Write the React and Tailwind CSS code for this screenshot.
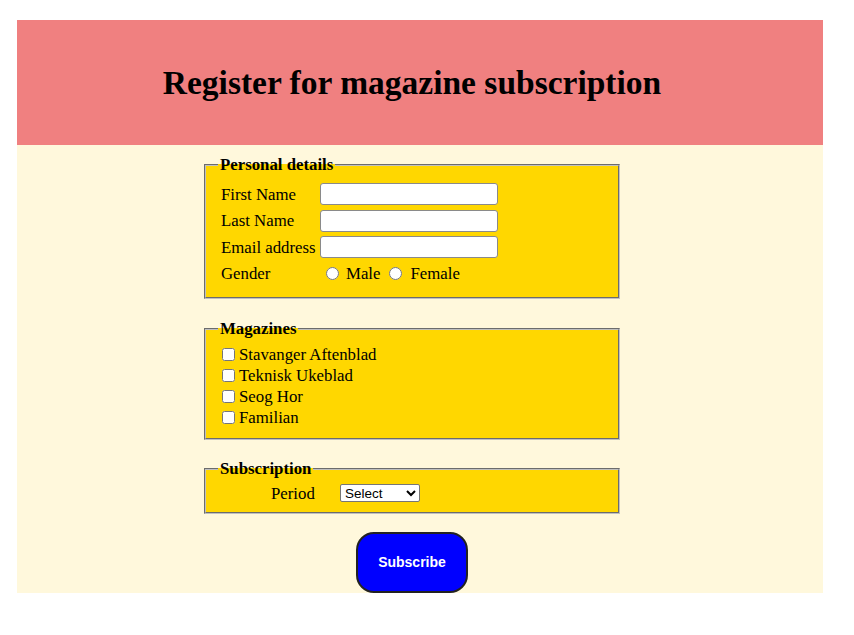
import React from "react";

const serif = { fontFamily: '"Liberation Serif", "Times New Roman", serif' };

function Fieldset({ legend, className = "", children }) {
  return (
    <fieldset
      className={`w-[416px] mx-auto bg-[#FFD700] border-2 [border-style:groove] border-[#c0c0c0] px-[12px] pt-[6px] pb-[10px] ${className}`}
    >
      <legend className="px-[2px] font-bold text-[16.8px] leading-[19px] text-black">{legend}</legend>
      {children}
    </fieldset>
  );
}

function TextRow({ label }) {
  return (
    <div className="flex items-center h-[26.5px] pl-[3px]">
      <span className="w-[99px] shrink-0">{label}</span>
      <input
        type="text"
        className="w-[178px] h-[22px] bg-white border border-[#8a8a8a] rounded-[3px] px-[2px] text-[13px]"
        style={{ fontFamily: '"Liberation Sans", Arial, sans-serif' }}
      />
    </div>
  );
}

function Check({ label }) {
  return (
    <label className="flex items-center h-[21px]">
      <input type="checkbox" className="ml-[4px] mr-[4px] w-[13px] h-[13px]" />
      <span>{label}</span>
    </label>
  );
}

export default function App() {
  return (
    <div className="w-[854px] h-[635px] bg-white pt-[20px] pl-[17px]" style={serif}>
      <div className="w-[806px] h-[573px] bg-[#FFF8DC] text-black text-[16.8px] leading-[21px] flex flex-col">
        <div className="h-[125px] shrink-0 bg-[#F08080] flex items-center justify-center pr-[16px]">
          <h1 className="text-[33.5px] font-bold leading-[38px]">Register for magazine subscription</h1>
        </div>
        <div className="pr-[16px] pt-[10px] flex flex-col flex-1">
          <Fieldset legend="Personal details">
            <div className="pt-[1px]">
              <TextRow label="First Name" />
              <TextRow label="Last Name" />
              <TextRow label="Email address" />
              <div className="flex items-center h-[26.5px] pl-[3px]">
                <span className="w-[105px] shrink-0">Gender</span>
                <input type="radio" name="g" className="w-[13px] h-[13px] mr-[7px]" />
                <span className="mr-[9px]">Male</span>
                <input type="radio" name="g" className="w-[13px] h-[13px] mr-[8px]" />
                <span>Female</span>
              </div>
            </div>
          </Fieldset>
          <Fieldset legend="Magazines" className="mt-[20px]">
            <Check label="Stavanger Aftenblad" />
            <Check label="Teknisk Ukeblad" />
            <Check label="Seog Hor" />
            <Check label="Familian" />
          </Fieldset>
          <Fieldset legend="Subscription" className="mt-[19px]">
            <div className="flex items-center h-[18px]">
              <span className="ml-[53px] w-[69px] shrink-0">Period</span>
              <select
                className="w-[80px] h-[18px] bg-white border border-[#767676] rounded-[2px] text-[13.5px] leading-[16px] text-black"
                style={{ fontFamily: '"Liberation Sans", Arial, sans-serif' }}
                defaultValue="select"
              >
                <option value="select">Select</option>
                <option value="1">1 month</option>
                <option value="6">6 months</option>
                <option value="12">12 months</option>
              </select>
            </div>
          </Fieldset>
          <div className="flex justify-center mt-auto">
            <button
              className="w-[112px] h-[61px] bg-[#0000FF] border-2 border-[#222] rounded-[18px] text-white font-bold text-[14px]"
              style={{ fontFamily: '"Liberation Sans", Arial, sans-serif' }}
            >
              Subscribe
            </button>
          </div>
        </div>
      </div>
    </div>
  );
}
